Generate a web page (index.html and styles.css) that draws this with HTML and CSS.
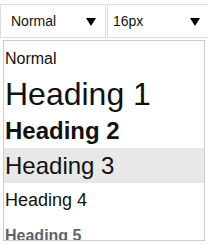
FILE: index.html
```html
<!DOCTYPE html>
<html lang="en">
<head>
    <meta charset="UTF-8">
    <meta name="viewport" content="width=device-width, initial-scale=1.0">
    <title>Heading picker</title>
    <link rel="stylesheet" href="styles.css">
</head>
<body>
    <!-- Toolbar selects -->
    <div class="toolbar">
        <div class="picker picker-header">
            <span class="picker-label">Normal</span>
            <span class="caret"></span>
        </div>
        <div class="picker picker-size">
            <span class="picker-label">16px</span>
            <span class="caret"></span>
        </div>
    </div>

    <!-- Open header dropdown -->
    <div class="dropdown">
        <div class="item item-normal">Normal</div>
        <div class="item item-h1">Heading 1</div>
        <div class="item item-h2">Heading 2</div>
        <div class="item item-h3 active">Heading 3</div>
        <div class="item item-h4">Heading 4</div>
        <div class="item item-h5">Heading 5</div>
    </div>
</body>
</html>
```

FILE: styles.css
```css
body {
    font-family: "Liberation Sans", Arial, sans-serif;
    margin: 0;
    padding: 0;
    background-color: #fff;
    color: #111;
    overflow: hidden;
}
.toolbar {
    display: flex;
    gap: 1px;
    padding-top: 4px;
}
.picker {
    box-sizing: border-box;
    height: 34px;
    border: 1px solid #ddd;
    display: flex;
    align-items: center;
    justify-content: space-between;
    font-size: 14px;
    flex-shrink: 0;
}
.picker-header {
    width: 106px;
    padding: 0 9px 0 10px;
}
.picker-size {
    width: 103px;
    padding: 0 9px 0 5px;
}
.caret {
    width: 0;
    height: 0;
    border-left: 5px solid transparent;
    border-right: 5px solid transparent;
    border-top: 8px solid #000;
    margin-top: 2px;
}
.dropdown {
    box-sizing: border-box;
    margin: 2px 0 0 3px;
    width: 202px;
    height: 201px;
    border: 1px solid #ccc;
    overflow: hidden;
}
.item {
    display: flex;
    align-items: center;
    height: 35px;
    padding-left: 1px;
    white-space: nowrap;
}
.item.active {
    background-color: #e8e8e8;
}
.item-normal {
    font-size: 16px;
}
.item-h1 {
    height: 37px;
    font-size: 32px;
}
.item-h2 {
    font-size: 24px;
    font-weight: bold;
}
.item-h3 {
    font-size: 24px;
}
.item-h4 {
    font-size: 18px;
}
.item-h5 {
    font-size: 16px;
    font-weight: bold;
    color: #5f6170;
}
```
